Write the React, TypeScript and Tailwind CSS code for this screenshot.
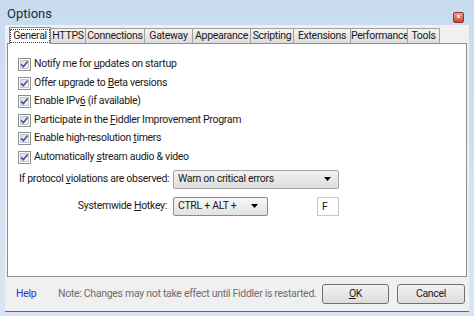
import React from 'react';

const font = { fontFamily: 'Roboto, Lato, sans-serif', letterSpacing: '-0.3px' };

function Check() {
  return (
    <svg width="13" height="13" viewBox="0 0 13 13" className="shrink-0">
      <defs>
        <linearGradient id="cb" x1="0" y1="0" x2="1" y2="1">
          <stop offset="0" stopColor="#dcdcdc" />
          <stop offset="1" stopColor="#fbfbfb" />
        </linearGradient>
      </defs>
      <rect x="0.5" y="0.5" width="12" height="12" fill="#fff" stroke="#8e8f8f" />
      <rect x="2.5" y="2.5" width="8" height="8" fill="url(#cb)" stroke="#c6c6c6" />
      <path d="M3.2 6.4 L5.3 8.8 L9.6 3.4" fill="none" stroke="#3d56a8" strokeWidth="1.6" />
    </svg>
  );
}

function Arrow() {
  return (
    <svg width="7" height="4" viewBox="0 0 7 4">
      <path d="M0 0 H7 L3.5 4 Z" fill="#000" />
    </svg>
  );
}

const tabs: [string, string][] = [
  ['General', 'w-[42px]'],
  ['HTTPS', 'w-[36px]'],
  ['Connections', 'w-[60px]'],
  ['Gateway', 'w-[49px]'],
  ['Appearance', 'w-[59px]'],
  ['Scripting', 'w-[44px]'],
  ['Extensions', 'w-[58px]'],
  ['Performance', 'w-[58px]'],
  ['Tools', 'w-[33px]'],
];

const options: { before: string; key: string; after: string }[] = [
  { before: 'Notify me for ', key: 'u', after: 'pdates on startup' },
  { before: 'Offer upgrade to ', key: 'B', after: 'eta versions' },
  { before: 'Enable IPv', key: '6', after: ' (if available)' },
  { before: 'Participate in the ', key: 'F', after: 'iddler Improvement Program' },
  { before: 'Enable high-resolution ', key: 't', after: 'imers' },
  { before: 'Automatically ', key: 's', after: 'tream audio & video' },
];

export default function App() {
  return (
    <div
      className="w-[474px] h-[316px] flex flex-col bg-gradient-to-b from-[#c9dcef] to-[#d7e5f3] text-[10.5px] text-[#1a1a1a] overflow-hidden whitespace-nowrap"
      style={font}
    >
      <div className="h-[25px] flex items-center justify-between pl-[7px] pr-[10px] shrink-0">
        <span className="text-[13px] text-[#1e2a3a] leading-none pt-[1px] tracking-normal">Options</span>
        <div className="w-[11px] h-[11px] mt-[10px] rounded-[2px] bg-gradient-to-b from-[#e8a08c] to-[#c8452e] border border-[#8b3a2a] flex items-center justify-center text-white text-[7px] leading-none font-bold">
          ×
        </div>
      </div>
      <div className="flex-1 mx-[5px] bg-[#f0f0f0] flex flex-col">
        <div className="flex pl-[4px] pt-[2px] h-[18px] items-end">
          {tabs.map(([t, w], i) =>
            i === 0 ? (
              <div key={t} className={`${w} h-[17px] px-[2px] pt-[1px] bg-white border border-b-0 border-[#8c8c8c] flex justify-center items-start -mb-[1px] relative z-10`}>
                <span className="border border-dotted border-[#444] px-[2px] leading-[12px]">{t}</span>
              </div>
            ) : (
              <div
                key={t}
                className={`${w} h-[15px] text-center border border-b-0 border-[#a0a0a0] -ml-[1px] bg-gradient-to-b from-[#f4f4f4] to-[#dcdcdc] leading-[14px]`}
              >
                {t}
              </div>
            )
          )}
        </div>
        <div className="h-[234px] mx-[2px] bg-white border border-[#8c8c8c] flex flex-col pl-[10px] pt-[14px]">
          <div className="flex flex-col gap-[5.5px]">
            {options.map((o) => (
              <div key={o.before} className="flex items-center gap-[3px] h-[13px]">
                <Check />
                <span className="leading-none">
                  {o.before}
                  <span className="underline">{o.key}</span>
                  {o.after}
                </span>
              </div>
            ))}
          </div>
          <div className="flex items-center mt-[6px]">
            <span className="w-[155px] pl-[1px]">
              If protocol <span className="underline">v</span>iolations are observed:
            </span>
            <div className="w-[166px] h-[19px] border border-[#a5a5a5] rounded-[2px] bg-gradient-to-b from-[#f2f2f2] to-[#dedede] flex items-center justify-between pl-[4px] pr-[7px]">
              <span>Warn on critical errors</span>
              <Arrow />
            </div>
          </div>
          <div className="flex items-center mt-[8px]">
            <span className="w-[155px] text-right pr-[6px]">
              Systemwide <span className="underline">H</span>otkey:
            </span>
            <div className="w-[95px] h-[19px] border border-[#8a8a8a] rounded-[2px] bg-gradient-to-b from-[#f7f7f7] to-[#e2e2e2] flex items-center justify-between pl-[4px] pr-[9px]">
              <span>CTRL + ALT +</span>
              <Arrow />
            </div>
            <div className="ml-[49px] w-[22px] h-[19px] border border-[#c8c8c8] bg-white pl-[4px] leading-[17px]">F</div>
          </div>
        </div>
        <div className="flex-1 flex items-center pl-[11px] pr-[4px]">
          <span className="text-[#3333cc] w-[42px]">Help</span>
          <span className="text-[#6d6d6d] flex-1">Note: Changes may not take effect until Fiddler is restarted.</span>
          <div className="w-[67px] h-[20px] border border-[#707070] rounded-[3px] bg-gradient-to-b from-[#f2f2f2] to-[#dcdcdc] flex items-center justify-center mr-[8px]">
            <span className="underline">O</span>K
          </div>
          <div className="w-[68px] h-[20px] border border-[#707070] rounded-[3px] bg-gradient-to-b from-[#f2f2f2] to-[#dcdcdc] flex items-center justify-center">
            Cancel
          </div>
        </div>
      </div>
      <div className="h-[5px] mx-[5px] border-t border-[#5a6b80] shrink-0" />
    </div>
  );
}
